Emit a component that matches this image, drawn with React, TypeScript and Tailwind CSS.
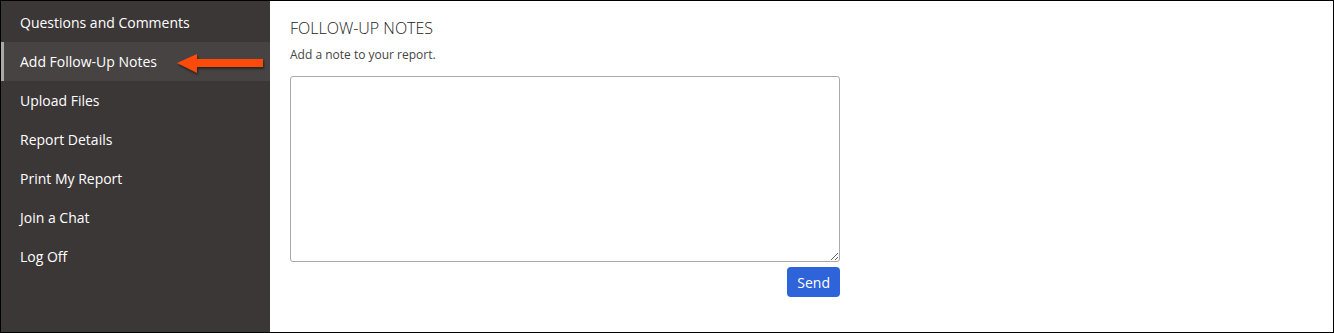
import React, { useState } from 'react';

const menu = [
  'Questions and Comments',
  'Add Follow-Up Notes',
  'Upload Files',
  'Report Details',
  'Print My Report',
  'Join a Chat',
  'Log Off',
];

const Arrow: React.FC = () => (
  <svg
    className="absolute left-[174px] top-[51px] drop-shadow-[1px_2px_1px_rgba(0,0,0,0.45)]"
    width="90"
    height="24"
    viewBox="0 0 90 24"
  >
    <polygon points="2,11 22,2 22,7 88,7 88,15 22,15 22,21" fill="#fc4a0a" />
  </svg>
);

const App: React.FC = () => {
  const [active] = useState(1);
  const [note, setNote] = useState('');

  return (
    <div className="w-[1334px] h-[333px] border border-black flex font-['Open_Sans',sans-serif] overflow-hidden">
      <aside className="relative w-[269px] shrink-0 bg-[#3b3737] pt-[2px]">
        <ul>
          {menu.map((item, i) => (
            <li
              key={item}
              className={`h-[39px] flex items-center pl-[16px] text-[14px] text-white border-l-[3px] ${
                i === active ? 'bg-[#474342] border-[#a9a9a9]' : 'border-transparent'
              }`}
            >
              {item}
            </li>
          ))}
        </ul>
        <Arrow />
      </aside>

      <main className="flex-1 bg-white pl-[20px] pt-[17px]">
        <h2 className="text-[16px] text-[#222] font-light leading-[20px]">FOLLOW-UP NOTES</h2>
        <p className="mt-[9px] text-[12px] text-[#444] leading-[16px]">Add a note to your report.</p>
        <div className="w-[550px] mt-[13px] flex flex-col items-end">
          <textarea
            value={note}
            onChange={e => setNote(e.target.value)}
            className="w-[550px] h-[186px] border border-[#a9a9a9] rounded-[3px] block"
          />
          <button className="mt-[5px] h-[30px] px-[10px] bg-[#2f63d9] text-white text-[14px] rounded-[4px]">
            Send
          </button>
        </div>
      </main>
    </div>
  );
};

export default App;
